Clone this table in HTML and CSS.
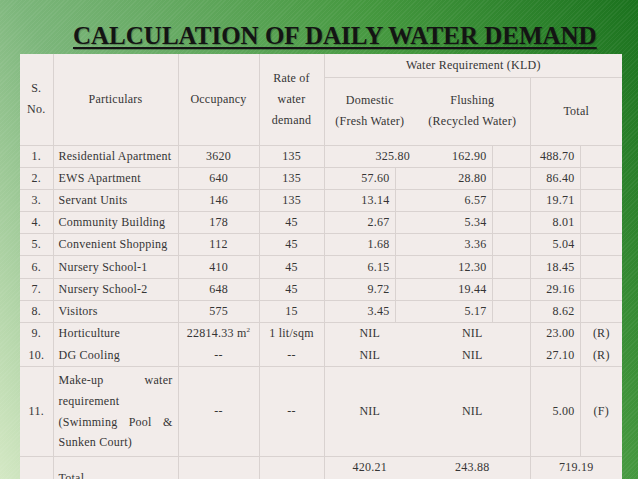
FILE: index.html
```html
<!DOCTYPE html>
<html>
<head>
<meta charset="utf-8">
<link rel="stylesheet" href="styles.css">
</head>
<body>
<div class="slide">
  <h1 class="title">CALCULATION OF DAILY WATER DEMAND</h1>
  <table class="demand">
    <colgroup>
      <col class="c-sno"><col class="c-part"><col class="c-occ"><col class="c-rate">
      <col class="c-dom"><col class="c-gap"><col class="c-fl"><col class="c-fl2">
      <col class="c-tot"><col class="c-tag">
    </colgroup>
    <tr class="h1">
      <td rowspan="2" class="ctr">S.<br>No.</td>
      <td rowspan="2" class="ctr">Particulars</td>
      <td rowspan="2" class="ctr">Occupancy</td>
      <td rowspan="2" class="ctr">Rate of<br>water<br>demand</td>
      <td colspan="6" class="ctr">Water Requirement (KLD)</td>
    </tr>
    <tr class="h2">
      <td colspan="2" class="ctr nor">Domestic<br>(Fresh Water)</td>
      <td colspan="2" class="ctr nol">Flushing<br>(Recycled Water)</td>
      <td colspan="2" class="ctr">Total</td>
    </tr>
    <tr class="r">
      <td class="ctr">1.</td><td>Residential Apartment</td><td class="ctr">3620</td><td class="ctr">135</td>
      <td colspan="2" class="num nor">325.80</td><td class="num nol">162.90</td><td></td>
      <td class="num">488.70</td><td></td>
    </tr>
    <tr class="r">
      <td class="ctr">2.</td><td>EWS Apartment</td><td class="ctr">640</td><td class="ctr">135</td>
      <td class="num">57.60</td><td colspan="2" class="num">28.80</td><td></td>
      <td class="num">86.40</td><td></td>
    </tr>
    <tr class="r">
      <td class="ctr">3.</td><td>Servant Units</td><td class="ctr">146</td><td class="ctr">135</td>
      <td class="num">13.14</td><td colspan="2" class="num">6.57</td><td></td>
      <td class="num">19.71</td><td></td>
    </tr>
    <tr class="r">
      <td class="ctr">4.</td><td>Community Building</td><td class="ctr">178</td><td class="ctr">45</td>
      <td class="num">2.67</td><td colspan="2" class="num">5.34</td><td></td>
      <td class="num">8.01</td><td></td>
    </tr>
    <tr class="r">
      <td class="ctr">5.</td><td>Convenient Shopping</td><td class="ctr">112</td><td class="ctr">45</td>
      <td class="num">1.68</td><td colspan="2" class="num">3.36</td><td></td>
      <td class="num">5.04</td><td></td>
    </tr>
    <tr class="r">
      <td class="ctr">6.</td><td>Nursery School-1</td><td class="ctr">410</td><td class="ctr">45</td>
      <td class="num">6.15</td><td colspan="2" class="num">12.30</td><td></td>
      <td class="num">18.45</td><td></td>
    </tr>
    <tr class="r">
      <td class="ctr">7.</td><td>Nursery School-2</td><td class="ctr">648</td><td class="ctr">45</td>
      <td class="num">9.72</td><td colspan="2" class="num">19.44</td><td></td>
      <td class="num">29.16</td><td></td>
    </tr>
    <tr class="r">
      <td class="ctr">8.</td><td>Visitors</td><td class="ctr">575</td><td class="ctr">15</td>
      <td class="num">3.45</td><td colspan="2" class="num">5.17</td><td></td>
      <td class="num">8.62</td><td></td>
    </tr>
    <tr class="r nob">
      <td class="ctr">9.</td><td>Horticulture</td><td class="ctr">22814.33 m<sup>2</sup></td><td class="ctr">1 lit/sqm</td>
      <td colspan="2" class="ctr nor">NIL</td><td colspan="2" class="ctr nol">NIL</td>
      <td class="num">23.00</td><td class="ctr">(R)</td>
    </tr>
    <tr class="r not">
      <td class="ctr">10.</td><td>DG Cooling</td><td class="ctr">--</td><td class="ctr">--</td>
      <td colspan="2" class="ctr nor">NIL</td><td colspan="2" class="ctr nol">NIL</td>
      <td class="num">27.10</td><td class="ctr">(R)</td>
    </tr>
    <tr class="r11">
      <td class="ctr">11.</td><td class="just">Make-up water requirement (Swimming Pool &amp; Sunken Court)</td><td class="ctr">--</td><td class="ctr">--</td>
      <td colspan="2" class="ctr nor">NIL</td><td colspan="2" class="ctr nol">NIL</td>
      <td class="num">5.00</td><td class="ctr">(F)</td>
    </tr>
    <tr class="rt">
      <td></td><td class="total">Total</td><td></td><td></td>
      <td colspan="2" class="ctr top nor">420.21</td><td colspan="2" class="ctr top nol">243.88</td>
      <td colspan="2" class="ctr top">719.19</td>
    </tr>
  </table>
</div>
</body>
</html>
```

FILE: styles.css
```css
html, body {
  margin: 0;
  padding: 0;
}

body {
  width: 638px;
  height: 479px;
  overflow: hidden;
}

.slide {
  width: 638px;
  height: 479px;
  overflow: hidden;
  background:
    repeating-linear-gradient(135deg, rgba(255,255,255,0.05) 0 1px, rgba(0,0,0,0) 1px 3px),
    linear-gradient(60deg, #d4e8c4 0%, #7cb67b 32%, #45983f 70%, #1b721e 100%);
  font-family: "Liberation Serif", "Times New Roman", serif;
}

.title {
  margin: 0;
  padding: 23px 0 0 73px;
  height: 31px;
  font-size: 25px;
  line-height: 25px;
  font-weight: bold;
  color: #141414;
  text-decoration: underline;
  text-decoration-thickness: 2px;
  text-underline-offset: 3px;
  text-shadow: 1px 1px 1px rgba(0,0,0,0.25);
  white-space: nowrap;
}

.demand {
  margin-left: 20px;
  border-collapse: collapse;
  table-layout: fixed;
  width: 602px;
  background: #f2ecea;
  color: #353535;
  font-size: 12px;
  letter-spacing: 0.25px;
}

.c-sno { width: 33px; }
.c-part { width: 125px; }
.c-occ { width: 81px; }
.c-rate { width: 65px; }
.c-dom { width: 71px; }
.c-gap { width: 20px; }
.c-fl { width: 77px; }
.c-fl2 { width: 38px; }
.c-tot { width: 50px; }
.c-tag { width: 42px; }

.demand td {
  border: 1px solid #d9d2d0;
  padding: 0 5px;
  vertical-align: middle;
  line-height: 21px;
  white-space: nowrap;
  overflow: hidden;
}

.demand tr:first-child td {
  border-top: none;
}

.demand td:first-child {
  border-left: none;
}

.demand td:last-child {
  border-right: none;
}

.h1 { height: 23px; }
.h2 { height: 68px; }
.r { height: 22.2px; }
.r11 { height: 89.7px; }
.rt { height: 50px; }

.ctr { text-align: center; }
.num { text-align: right; }
.top { vertical-align: top !important; padding-top: 0 !important; }

.demand td.nor { border-right: none; }
.demand td.nol { border-left: none; }
.nob td { border-bottom: none; }
.not td { border-top: none; }

.demand td.just {
  white-space: normal;
  text-align: justify;
  line-height: 20.7px;
}

.demand td.total {
  vertical-align: top;
  padding-top: 11px;
}

sup {
  font-size: 7px;
  line-height: 0;
  vertical-align: 5px;
}
```
